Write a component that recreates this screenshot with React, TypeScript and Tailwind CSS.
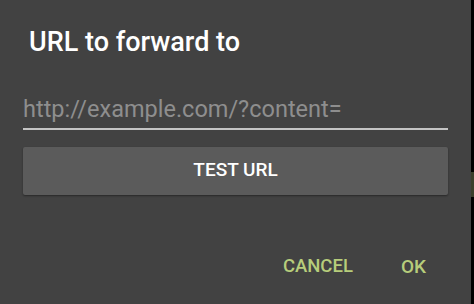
export default function App() {
  return (
    <div className="flex h-[304px] w-[474px] overflow-hidden bg-black font-['Roboto',sans-serif]">
      <div className="flex h-full w-[471px] flex-col bg-[#424242] px-[23px]">
        <h1 className="mt-[29px] ml-[6px] text-[27px] font-medium leading-none text-white">
          URL to forward to
        </h1>

        <div className="mt-[42px] border-b-2 border-[#c4c4c4] pb-[6px]">
          <span className="block text-[23.5px] leading-none text-[#8e8e8e]">
            http://example.com/?content=
          </span>
        </div>

        <button className="mt-[17px] h-[48px] w-full rounded-[2px] bg-[#5b5b5b] text-[19px] font-medium text-white shadow-[0_1px_2px_rgba(0,0,0,0.4)]">
          TEST URL
        </button>

        <div className="mt-[62px] flex justify-end gap-[48px] pr-[22px]">
          <span className="text-[18.5px] font-medium leading-none text-[#b7cd7b]">CANCEL</span>
          <span className="text-[19px] font-medium leading-none text-[#b7cd7b]">OK</span>
        </div>
      </div>
      <div className="flex flex-1 flex-col">
        <div className="mt-[172px] h-[25px] bg-[#3b3f2c]" />
      </div>
    </div>
  )
}
